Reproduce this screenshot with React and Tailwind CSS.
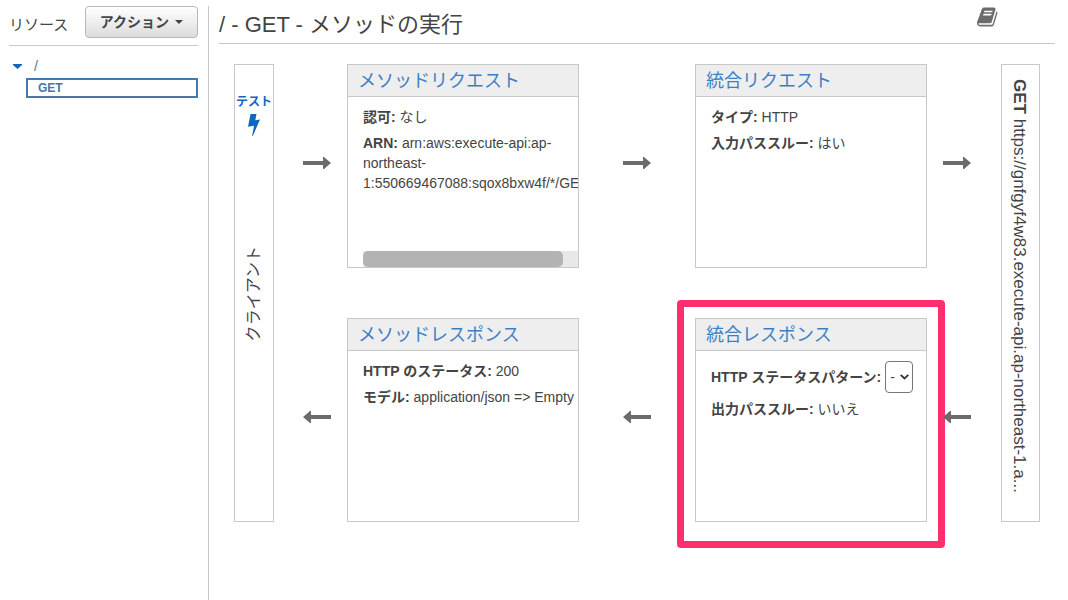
import React, { useState } from 'react';

const BookIcon = () => (
  <svg className="w-[22px] h-[22px]" viewBox="0 0 1792 1792" fill="currentColor" aria-hidden="true">
    <path d="M1639 478q40 57 18 129l-275 906q-19 64-76.500 107.500t-122.500 43.500h-923q-77 0-148.500-53.500t-99.500-131.500q-24-67-2-127 0-4 3-27t4-37q1-8-3-21.500t-3-19.500q2-11 8-21t16.500-23.500 16.500-23.500q23-38 45-91.500t30-91.500q3-10 .5-30t-.5-28q3-11 17-28t17-23q21-36 42-92t25-90q1-9-2.500-32t.5-28q4-13 22-30.500t22-22.500q19-26 42.500-84.500t27.500-96.500q1-8-3-25.500t-2-26.500q2-8 9-18t18-23 17-21q8-12 16.500-30.500t15-35 16-36 19.500-32 26.500-23.500 36-11.500 47.500 5.500l-1 3q38-9 51-9h761q74 0 114 56t18 130l-274 906q-36 119-71.500 153.500t-128.500 34.500h-869q-27 0-38 15-11 16-1 43 24 70 144 70h923q29 0 56-15.500t35-41.500l300-987q7-22 5-57 38 15 59 43zm-1064 2q-4 13 2 22.500t20 9.500h608q13 0 25.500-9.500t16.500-22.500l21-64q4-13-2-22.500t-20-9.500h-608q-13 0-25.500 9.500t-16.500 22.500zm-83 256q-4 13 2 22.500t20 9.500h608q13 0 25.500-9.500t16.500-22.500l21-64q4-13-2-22.500t-20-9.500h-608q-13 0-25.500 9.500t-16.500 22.500z" />
  </svg>
);

const BoltIcon = () => (
  <svg className="w-3 h-[22px]" viewBox="0 0 12 22" fill="currentColor" aria-hidden="true">
    <path d="M2.500 0h6L7.300 6.200l4.700-.7L4.800 22l-.6-.3L6 11.700l-6 1.100z" />
  </svg>
);

const Arrow = ({ left }) => (
  <svg
    className={left ? 'w-7 h-3 shrink-0 rotate-180' : 'w-7 h-3 shrink-0'}
    viewBox="0 0 28 12"
    fill="#6b6b6b"
    aria-hidden="true"
  >
    <path d="M0 4h20V0h1l7 6-7 6h-1V8H0z" />
  </svg>
);

const Field = ({ label, children }) => (
  <p>
    <strong>{label}:</strong> {children}
  </p>
);

const Card = ({ title, highlighted, scrollable, children }) => (
  <section className="relative min-w-0 border border-[#c8c8c8] bg-white">
    <div className="flex h-full flex-col overflow-hidden">
      <h2 className="h-8 shrink-0 border-b border-[#c8c8c8] bg-[#eee] pl-2.5 text-lg leading-8">
        <a href="#" className="text-[#3d7fc4]">{title}</a>
      </h2>
      <div className="flex flex-1 flex-col gap-1.5 pt-2.5 pl-[15px] text-sm leading-5">
        {children}
        {scrollable && (
          <div className="mt-auto h-4 bg-[#e8e8e8]">
            <div className="h-full w-[93%] rounded-[5px] bg-[#b3b3b3]" />
          </div>
        )}
      </div>
    </div>
    {highlighted && (
      <div className="pointer-events-none absolute -inset-x-[19px] -top-[19px] -bottom-[27px] rounded border-[7px] border-[#ff2f6d]" />
    )}
  </section>
);

const Sidebar = () => {
  const [isOpen, setIsOpen] = useState(true);

  return (
    <aside className="mt-1.5 w-[209px] shrink-0 border-r border-[#c8c8c8] pl-[9px] pr-2.5">
      <div className="flex h-10 items-start justify-between border-b border-[#c8c8c8]">
        <h2 className="pt-[9px] text-[15px] leading-5">リソース</h2>
        <button className="flex h-8 items-center gap-1.5 rounded border border-[#b8b8b8] bg-linear-to-b from-white to-[#dcdcdc] px-3.5 text-sm font-bold">
          アクション
          <svg className="w-2 h-1" viewBox="0 0 8 4" fill="currentColor" aria-hidden="true">
            <path d="M0 0h8L4 4z" />
          </svg>
        </button>
      </div>
      <div className="flex h-5 mt-2.5 items-center gap-3 pl-1 text-sm">
        <button onClick={() => setIsOpen(!isOpen)} aria-label="/" className="text-[#1166bb]">
          <svg className="w-[9px] h-[5px]" viewBox="0 0 9 5" fill="currentColor" aria-hidden="true">
            <path d="M0 0h9v1L4.500 5 0 1z" />
          </svg>
        </button>
        <a href="#" className="text-[#4477aa]">/</a>
      </div>
      {isOpen && (
        <a
          href="#"
          className="ml-[17px] mt-0.5 block h-5 border-2 border-[#4477aa] pl-2.5 text-xs leading-4 font-bold text-[#4477aa]"
        >
          GET
        </a>
      )}
    </aside>
  );
};

const App = () => {
  return (
    <div className="flex min-h-screen bg-white font-['Liberation_Sans','Noto_Sans_CJK_JP',sans-serif] text-[#444]">
      <Sidebar />
      <main className="min-w-0 flex-1 pl-2.5 pr-[13px]">
        <header className="flex h-11 items-start justify-between border-b border-[#c8c8c8] pr-14">
          <h1 className="pt-[11px] text-[22px] leading-7">/ - GET - メソッドの実行</h1>
          <button aria-label="ドキュメント" className="pt-1.5 text-[#6b6b6b]">
            <BookIcon />
          </button>
        </header>

        <div className="mx-[15px] mt-5 grid grid-cols-[40px_73fr_232fr_116fr_232fr_74fr_39px] grid-rows-[204px_204px] gap-y-[50px]">
          <div className="row-span-2 flex flex-col items-center border border-[#c8c8c8] pt-[29px]">
            <a href="#" className="flex flex-col items-center gap-1 text-xs leading-4 font-bold whitespace-nowrap text-[#1166bb]">
              テスト
              <BoltIcon />
            </a>
            <div className="mt-[110px] rotate-180 text-base leading-5 [writing-mode:vertical-rl] [text-orientation:sideways]">
              クライアント
            </div>
          </div>

          <div className="flex items-center justify-end pr-4 pb-1.5">
            <Arrow />
          </div>
          <Card title="メソッドリクエスト" scrollable>
            <Field label="認可">なし</Field>
            <Field label="ARN">
              arn:aws:execute-api:ap-
              <br />
              northeast-
              <br />
              <span className="whitespace-nowrap">1:550669467088:sqox8bxw4f/*/GET/</span>
            </Field>
          </Card>
          <div className="flex items-center justify-center pb-1.5">
            <Arrow />
          </div>
          <Card title="統合リクエスト">
            <Field label="タイプ">HTTP</Field>
            <Field label="入力パススルー">はい</Field>
          </Card>
          <div className="flex items-center pb-1.5 pl-4">
            <Arrow />
          </div>

          <div className="col-start-7 row-span-2 row-start-1 border border-[#c8c8c8] pt-3.5">
            <p className="w-full text-[17px] leading-10 whitespace-nowrap [writing-mode:vertical-rl]">
              <strong>GET</strong> https://gnfgyf4w83.execute-api.ap-northeast-1.a...
            </p>
          </div>

          <div className="col-start-2 flex items-center justify-end pr-4 pb-1.5">
            <Arrow left />
          </div>
          <Card title="メソッドレスポンス">
            <Field label="HTTP のステータス">200</Field>
            <Field label="モデル">
              <span className="whitespace-nowrap">application/json =&gt; Empty</span>
            </Field>
          </Card>
          <div className="flex items-center justify-center pb-1.5">
            <Arrow left />
          </div>
          <Card title="統合レスポンス" highlighted>
            <div className="flex items-center gap-1 whitespace-nowrap">
              <label htmlFor="status-pattern" className="font-bold">HTTP ステータスパターン:</label>
              <div className="relative">
                <select
                  id="status-pattern"
                  className="block h-8 w-7 appearance-none rounded border border-[#767676] bg-white pl-1 text-sm"
                >
                  <option>-</option>
                </select>
                <svg
                  className="pointer-events-none absolute top-[13px] right-1 w-[9px] h-1.5"
                  viewBox="0 0 9 6"
                  fill="none"
                  stroke="#333"
                  strokeWidth="1.8"
                  aria-hidden="true"
                >
                  <path d="M.7.8l3.800 3.700L8.300.8" />
                </svg>
              </div>
            </div>
            <Field label="出力パススルー">いいえ</Field>
          </Card>
          <div className="flex items-center pb-1.5 pl-4">
            <Arrow left />
          </div>
        </div>
      </main>
    </div>
  );
};

export default App;
